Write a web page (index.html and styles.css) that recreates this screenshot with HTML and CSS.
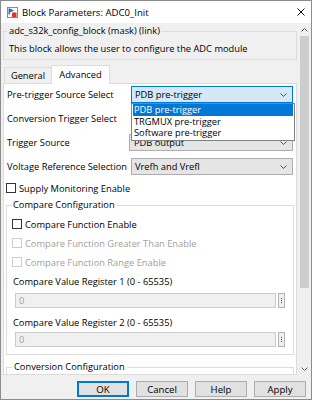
FILE: index.html
```html
<!DOCTYPE html>
<html lang="en">
<head>
  <meta charset="UTF-8">
  <title>Block Parameters: ADC0_Init</title>
  <link rel="stylesheet" href="styles.css">
</head>
<body>
  <div class="window">
    <!-- Title bar -->
    <div class="titlebar">
      <svg class="app-icon" viewBox="0 0 11 11">
        <rect x="0.5" y="0.5" width="10" height="10" fill="#fff" stroke="#8a8a8a"/>
        <rect x="1.5" y="1.5" width="1.5" height="6" fill="#2f6fb7"/>
        <polygon points="3,1.5 7,3.5 3,5.5" fill="#2f6fb7"/>
        <rect x="5" y="5.5" width="4.5" height="4.5" fill="#d8361f"/>
      </svg>
      <span class="title">Block Parameters: ADC0_Init</span>
      <svg class="close" viewBox="0 0 8 8">
        <path d="M0.5 0.5 L7.5 7.5 M7.5 0.5 L0.5 7.5" stroke="#111" stroke-width="1"/>
      </svg>
    </div>

    <div class="main">
      <div class="content">
        <fieldset class="group mask-group">
          <legend>adc_s32k_config_block (mask) (link)</legend>
          <p class="description">This block allows the user to configure the ADC module</p>
        </fieldset>

        <div class="tabs">
          <div class="tab">General</div>
          <div class="tab active">Advanced</div>
        </div>

        <div class="panel">
          <div class="param-grid">
            <span class="param-label">Pre-trigger Source Select</span>
            <div class="combo focused">
              <span>PDB pre-trigger</span>
              <svg class="chevron" viewBox="0 0 7 4"><path d="M0.5 0.5 L3.5 3.5 L6.5 0.5" fill="none" stroke="#555"/></svg>
              <!-- open dropdown list -->
              <ul class="combo-list">
                <li class="selected">PDB pre-trigger</li>
                <li>TRGMUX pre-trigger</li>
                <li>Software pre-trigger</li>
              </ul>
            </div>

            <span class="param-label">Conversion Trigger Select</span>
            <div class="combo">
              <svg class="chevron" viewBox="0 0 7 4"><path d="M0.5 0.5 L3.5 3.5 L6.5 0.5" fill="none" stroke="#555"/></svg>
            </div>

            <span class="param-label">Trigger Source</span>
            <div class="combo wide">
              <span>PDB output</span>
              <svg class="chevron" viewBox="0 0 7 4"><path d="M0.5 0.5 L3.5 3.5 L6.5 0.5" fill="none" stroke="#555"/></svg>
            </div>

            <span class="param-label">Voltage Reference Selection</span>
            <div class="combo">
              <span>Vrefh and Vrefl</span>
              <svg class="chevron" viewBox="0 0 7 4"><path d="M0.5 0.5 L3.5 3.5 L6.5 0.5" fill="none" stroke="#555"/></svg>
            </div>
          </div>

          <label class="check-row supply-row"><span class="checkbox"></span>Supply Monitoring Enable</label>

          <fieldset class="group compare-group">
            <legend>Compare Configuration</legend>
            <label class="check-row"><span class="checkbox"></span>Compare Function Enable</label>
            <label class="check-row disabled"><span class="checkbox"></span>Compare Function Greater Than Enable</label>
            <label class="check-row disabled"><span class="checkbox"></span>Compare Function Range Enable</label>

            <div class="field-label first">Compare Value Register 1 (0 - 65535)</div>
            <div class="edit-row">
              <div class="edit">0</div>
              <div class="spin"><i></i><i></i><i></i></div>
            </div>

            <div class="field-label">Compare Value Register 2 (0 - 65535)</div>
            <div class="edit-row">
              <div class="edit">0</div>
              <div class="spin"><i></i><i></i><i></i></div>
            </div>
          </fieldset>

          <fieldset class="group conversion-group">
            <legend>Conversion Configuration</legend>
          </fieldset>
        </div>
      </div>

      <!-- Vertical scrollbar -->
      <div class="scrollbar">
        <div class="scroll-btn">
          <svg viewBox="0 0 7 4"><path d="M0.5 3.5 L3.5 0.5 L6.5 3.5" fill="none" stroke="#606060"/></svg>
        </div>
        <div class="scroll-thumb"></div>
        <div class="scroll-track"></div>
        <div class="scroll-btn">
          <svg viewBox="0 0 7 4"><path d="M0.5 0.5 L3.5 3.5 L6.5 0.5" fill="none" stroke="#606060"/></svg>
        </div>
      </div>
    </div>

    <!-- Dialog buttons -->
    <div class="buttons">
      <button class="btn default">OK</button>
      <button class="btn">Cancel</button>
      <button class="btn">Help</button>
      <button class="btn">Apply</button>
    </div>
  </div>
</body>
</html>
```

FILE: styles.css
```css
/* General */
* {
  box-sizing: border-box;
}

body {
  margin: 0;
  font-family: "Open Sans", "Noto Sans", sans-serif;
  font-size: 9.3px;
  color: #000;
}

/* Window frame */
.window {
  width: 312px;
  height: 400px;
  border: 1px solid #8c8c8c;
  background-color: #f0f0f0;
  display: flex;
  flex-direction: column;
}

.titlebar {
  height: 22px;
  background-color: #fff;
  display: flex;
  align-items: center;
  padding-left: 6px;
}

.app-icon {
  width: 11px;
  height: 11px;
  margin-right: 4px;
}

.title {
  flex: 1;
  font-size: 9.6px;
}

.close {
  width: 8px;
  height: 8px;
  margin-right: 6px;
}

.main {
  height: 352px;
  display: flex;
}

.content {
  width: 297px;
  display: flex;
  flex-direction: column;
}

/* Group boxes */
.group {
  border: 1px solid #dcdcdc;
  margin: 0;
  min-width: 0;
}

.group legend {
  padding: 0 2px;
  line-height: 14px;
}

.mask-group {
  margin: 1px 1px 0 2px;
  padding: 0 3px 3px;
}

.description {
  margin: 4px 0 0 2px;
  line-height: 14px;
}

/* Tabs */
.tabs {
  display: flex;
  align-items: flex-end;
  height: 18px;
  margin-top: 5px;
  padding-left: 3px;
}

.tab {
  height: 16px;
  width: 48px;
  border: 1px solid #dcdcdc;
  border-bottom: none;
  text-align: center;
  line-height: 15px;
  background-color: #f0f0f0;
}

.tab.active {
  width: 59px;
  height: 19px;
  margin-left: -1px;
  margin-bottom: -1px;
  line-height: 17px;
  background-color: #fff;
  position: relative;
  z-index: 1;
}

.panel {
  flex: 1;
  min-height: 0;
  overflow: hidden;
  margin: 0 1px 0 2px;
  padding: 2px 3px 0 2px;
  background-color: #fff;
  border: 1px solid #dcdcdc;
}

/* Parameter rows */
.param-grid {
  display: grid;
  grid-template-columns: 125px 1fr;
  grid-auto-rows: 17px;
  row-gap: 7px;
  align-items: center;
}

.param-label {
  padding-left: 1px;
  white-space: nowrap;
}

.combo {
  position: relative;
  height: 17px;
  border: 1px solid #adadad;
  background-color: #e5e5e5;
  display: flex;
  align-items: center;
  justify-content: flex-end;
  padding: 0 5px 0 3px;
}

.combo span {
  flex: 1;
}

.combo.focused {
  border-color: #0078d7;
  background-color: #d5e8f8;
}

.combo.wide {
  margin-left: -2px;
  padding-left: 4px;
}

.chevron {
  width: 7px;
  height: 4px;
}

.combo-list {
  position: absolute;
  top: 16px;
  left: -1px;
  right: -3px;
  margin: 0;
  padding: 0 1px 1px;
  list-style: none;
  background-color: #fff;
  border: 1px solid #828282;
  z-index: 2;
}

.combo-list li {
  height: 11.5px;
  line-height: 11.5px;
  padding-left: 1px;
}

.combo-list li.selected {
  background-color: #0078d7;
  color: #fff;
}

/* Checkboxes */
.check-row {
  display: flex;
  align-items: center;
  gap: 3px;
  height: 14px;
  white-space: nowrap;
}

.checkbox {
  width: 10px;
  height: 10px;
  border: 1px solid #333;
  background-color: #fff;
}

.check-row.disabled {
  color: #a0a0a0;
}

.check-row.disabled .checkbox {
  border-color: #cccccc;
}

.supply-row {
  margin-top: 6px;
}

.compare-group {
  margin: 3px -1px 0 0;
  padding: 0 8px 7px 5px;
}

.compare-group legend {
  padding: 0 1px;
}

.compare-group .check-row {
  margin-top: 5px;
}

.field-label {
  line-height: 14px;
  margin-top: 8px;
  padding-left: 1px;
}

.field-label.first {
  margin-top: 6px;
}

.edit-row {
  display: flex;
  gap: 2px;
  height: 15px;
  margin-top: 2px;
}

.field-label.first + .edit-row {
  margin-top: 4px;
}

.edit {
  flex: 1;
  margin-left: 3px;
  border: 1px solid #cccccc;
  background-color: #f0f0f0;
  color: #a0a0a0;
  line-height: 13px;
  padding-left: 3px;
}

.spin {
  width: 7px;
  border: 1px solid #b4b4b4;
  background-color: #f0f0f0;
  display: flex;
  flex-direction: column;
  align-items: center;
  justify-content: center;
  gap: 1px;
}

.spin i {
  width: 1px;
  height: 1px;
  background-color: #444;
}

.conversion-group {
  margin: 5px -1px 0 0;
  height: 60px;
  padding: 0 5px;
}

/* Scrollbar */
.scrollbar {
  width: 13px;
  display: flex;
  flex-direction: column;
}

.scroll-btn {
  height: 13px;
  display: flex;
  align-items: center;
  justify-content: center;
}

.scroll-btn svg {
  width: 7px;
  height: 4px;
}

.scroll-thumb {
  height: 252px;
  margin: 0 2px;
  background-color: #cdcdcd;
}

.scroll-track {
  flex: 1;
}

/* Dialog buttons */
.buttons {
  height: 24px;
  display: flex;
  justify-content: flex-end;
  gap: 7px;
  padding: 6px 5px 0 0;
}

.btn {
  width: 52px;
  height: 16px;
  padding: 0;
  font-family: inherit;
  font-size: 9.6px;
  color: #000;
  background-color: #e1e1e1;
  border: 1px solid #adadad;
}

.btn.default {
  border-color: #0078d7;
  box-shadow: inset 0 0 0 1px #0078d7;
}
```
